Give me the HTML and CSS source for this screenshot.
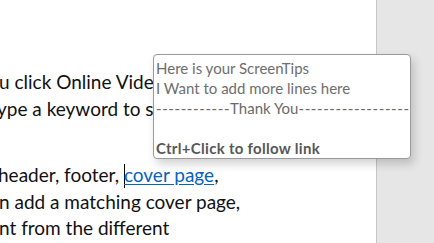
FILE: index.html
```html
<!DOCTYPE html>
<html lang="en">
<head>
  <meta charset="UTF-8">
  <title>ScreenTip</title>
  <link rel="stylesheet" href="styles.css">
</head>
<body>
  <div class="window">
    <div class="doc">
      <div class="para">
        <div class="line l1">u click Online Video, you can paste</div>
        <div class="line l2">ype a keyword to search online for</div>
      </div>
      <div class="para second">
        <div class="line l3">header, footer, <span class="caret"></span><a class="link" href="#">cover page</a>,</div>
        <div class="line l4">n add a matching cover page,</div>
        <div class="line l5">nt from the different</div>
      </div>
    </div>
    <div class="gutter"></div>

    <div class="tip">
      <div>Here is your ScreenTips</div>
      <div>I Want to add more lines here</div>
      <div class="rule"><span class="dash">------------</span>Thank You<span class="dash">-------------------</span></div>
      <div class="blank"></div>
      <div class="hint">Ctrl+Click to follow link</div>
    </div>
  </div>
</body>
</html>
```

FILE: styles.css
```css
html, body {
  margin: 0;
  padding: 0;
}
body {
  width: 434px;
  height: 243px;
  overflow: hidden;
  font-family: Lato, "Open Sans", sans-serif;
}
.window {
  position: relative;
  display: flex;
  height: 243px;
}
.doc {
  width: 377px;
  background: #fff;
  border-right: 1px solid #c6c6c6;
  overflow: hidden;
  padding-top: 69px;
  box-sizing: border-box;
}
.gutter {
  flex: 1;
  background: #e6e6e6;
}
.line {
  white-space: nowrap;
  font-size: 19px;
  line-height: 26.5px;
  color: #111;
}
.l1 { margin-left: -1px; }
.l2 { margin-left: -3px; }
.l3 { margin-left: -2px; }
.l4 { margin-left: -1px; }
.l5 { margin-left: -1px; }
.second {
  margin-top: 40px;
}
.link {
  color: #0563c1;
  text-decoration: underline;
  text-underline-offset: 2px;
}
.caret {
  display: inline-block;
  width: 1px;
  height: 24px;
  background: #000;
  vertical-align: -6px;
  margin-right: -1px;
}
.tip {
  position: absolute;
  left: 153px;
  top: 54px;
  width: 258px;
  height: 105px;
  box-sizing: border-box;
  padding: 3px 0 0 2px;
  background: #fff;
  border: 1px solid #9a9a9a;
  border-radius: 4px;
  box-shadow: 3px 5px 10px rgba(0, 0, 0, 0.18);
  font-size: 15px;
  line-height: 20px;
  color: #6e6e6e;
  white-space: nowrap;
  overflow: hidden;
}
.rule {
  color: #6a6a6a;
}
.dash {
  letter-spacing: 0.6px;
}
.blank {
  height: 20px;
}
.hint {
  font-weight: bold;
  color: #575757;
  letter-spacing: 0.3px;
}
```
